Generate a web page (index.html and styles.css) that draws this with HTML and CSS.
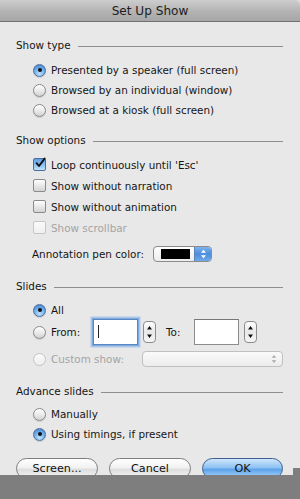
FILE: index.html
```html
<!DOCTYPE html>
<html>
<head>
<meta charset="utf-8">
<link rel="stylesheet" href="styles.css">
</head>
<body>
<div class="window">
  <div class="titlebar">Set Up Show</div>
  <div class="content">
    <div class="sect-head first"><span>Show type</span><i></i></div>
    <div class="opts">
      <div class="row r20"><span class="radio on"></span><span>Presented by a speaker (full screen)</span></div>
      <div class="row r20"><span class="radio"></span><span>Browsed by an individual (window)</span></div>
      <div class="row r20"><span class="radio"></span><span>Browsed at a kiosk (full screen)</span></div>
    </div>

    <div class="sect-head s-opt"><span>Show options</span><i></i></div>
    <div class="opts checks">
      <div class="row r21"><span class="check on"><svg width="12" height="12" viewBox="0 0 12 12"><path d="M2.6 6.2 L5 9 L10.6 1.6" fill="none" stroke="#111" stroke-width="1.9" stroke-linecap="round" stroke-linejoin="round"/></svg></span><span>Loop continuously until 'Esc'</span></div>
      <div class="row r21"><span class="check"></span><span>Show without narration</span></div>
      <div class="row r21"><span class="check"></span><span>Show without animation</span></div>
      <div class="row r21 disabled"><span class="check dis"></span><span>Show scrollbar</span></div>
    </div>
    <div class="pen-row">
      <span class="pen-label">Annotation pen color:</span>
      <span class="popup">
        <span class="swatch"></span>
        <span class="popup-arrows"><svg width="7" height="10" viewBox="0 0 7 10"><path d="M3.5 0.8 L6 3.8 H1 Z M3.5 9.2 L6 6.2 H1 Z" fill="#fff"/></svg></span>
      </span>
    </div>

    <div class="sect-head s-slides"><span>Slides</span><i></i></div>
    <div class="opts">
      <div class="row r18"><span class="radio on"></span><span>All</span></div>
      <div class="row from-row">
        <span class="radio"></span><span class="from-label">From:</span>
        <span class="field focus"><span class="caret"></span></span>
        <span class="stepper"><svg width="7" height="18" viewBox="0 0 7 18"><path d="M3.5 3 L6 6.5 H1 Z M3.5 15 L6 11.5 H1 Z" fill="#111"/></svg></span>
        <span class="to-label">To:</span>
        <span class="field"></span>
        <span class="stepper"><svg width="7" height="18" viewBox="0 0 7 18"><path d="M3.5 3 L6 6.5 H1 Z M3.5 15 L6 11.5 H1 Z" fill="#111"/></svg></span>
      </div>
      <div class="row custom-row disabled">
        <span class="radio dis"></span><span class="custom-label">Custom show:</span>
        <span class="popup-dis"><svg width="6" height="10" viewBox="0 0 6 10"><path d="M3 1 L5.2 3.8 H0.8 Z M3 9 L5.2 6.2 H0.8 Z" fill="#a8a8a8"/></svg></span>
      </div>
    </div>

    <div class="sect-head s-adv"><span>Advance slides</span><i></i></div>
    <div class="opts adv">
      <div class="row r20"><span class="radio"></span><span>Manually</span></div>
      <div class="row r20"><span class="radio on"></span><span>Using timings, if present</span></div>
    </div>

    <div class="buttons">
      <span class="btn">Screen...</span>
      <span class="btn">Cancel</span>
      <span class="btn ok">OK</span>
    </div>
  </div>
  <div class="shade-bottom"></div>
  <div class="shade-right"></div>
</div>
</body>
</html>
```

FILE: styles.css
```css
html, body {
  margin: 0;
  padding: 0;
}
body {
  width: 300px;
  height: 499px;
  overflow: hidden;
  background: #dcdcdc;
  font-family: "DejaVu Sans", "Liberation Sans", sans-serif;
  font-size: 10.4px;
  color: #151515;
}
.window {
  position: relative;
  width: 300px;
  height: 499px;
  background: #e8e8e8;
  border-top-right-radius: 5px;
  overflow: hidden;
}
.titlebar {
  height: 21px;
  border-bottom: 1px solid #707070;
  background: linear-gradient(#cdcdcd, #b3b3b3 55%, #a6a6a6);
  text-align: center;
  line-height: 22px;
  font-size: 12.1px;
  color: #1c1c1c;
}
.content {
  padding: 0 17px 0 16px;
}
.sect-head {
  display: flex;
  align-items: center;
  height: 14px;
}
.sect-head i {
  flex: 1;
  height: 0;
  border-top: 1px solid #8e8e8e;
  margin-left: 7px;
  margin-top: 3px;
}
.sect-head.first { margin-top: 16px; }
.s-opt { margin-top: 13px; }
.s-slides { margin-top: 17px; }
.s-adv { margin-top: 16px; }

.opts {
  padding-left: 17px;
  margin-top: 8px;
}
.opts.checks { margin-top: 7px; }
.opts.adv { margin-top: 6px; }
.row {
  display: flex;
  align-items: center;
  gap: 5px;
}
.r20 { height: 20px; }
.r21 { height: 21px; }
.r18 { height: 18px; }
.disabled { color: #a4a4a4; }

.radio {
  flex: none;
  width: 11px;
  height: 11px;
  border-radius: 50%;
  border: 1px solid #8a8a8a;
  background: linear-gradient(#ffffff, #e6e6e6 60%, #d2d2d2);
  box-shadow: 0 1px 1px rgba(0,0,0,0.12);
  position: relative;
}
.radio.on {
  border-color: #4a6f9e;
  background: radial-gradient(circle at 50% 80%, #bfe1fb, #6aaae8 55%, #3f7fca);
}
.radio.on::after {
  content: "";
  position: absolute;
  left: 3.5px;
  top: 3.5px;
  width: 4px;
  height: 4px;
  border-radius: 50%;
  background: #111;
}
.radio.dis {
  border-color: #c4c4c4;
  background: linear-gradient(#fbfbfb, #eeeeee);
  box-shadow: none;
}

.check {
  flex: none;
  width: 11px;
  height: 11px;
  border: 1px solid #8a8a8a;
  border-radius: 2px;
  background: linear-gradient(#ffffff, #e4e4e4 60%, #d4d4d4);
  position: relative;
}
.check.on {
  border-color: #4a6f9e;
  background: linear-gradient(#5f9ee6, #8cc0f2 55%, #c4e2fb);
}
.check svg {
  position: absolute;
  left: 0;
  top: -2px;
}
.check.dis {
  border-color: #c6c6c6;
  background: linear-gradient(#fbfbfb, #efefef);
}

.pen-row {
  display: flex;
  align-items: center;
  margin-top: 8px;
  padding-left: 16px;
  height: 16px;
}
.pen-label {
  flex: none;
  width: 121px;
}
.popup {
  display: flex;
  align-items: center;
  width: 59px;
  height: 16px;
  box-sizing: border-box;
  border: 1px solid #8c8c8c;
  border-radius: 4px;
  background: linear-gradient(#ffffff, #ececec);
  overflow: hidden;
}
.swatch {
  width: 29px;
  height: 10px;
  margin-left: 7px;
  background: #000;
}
.popup-arrows {
  margin-left: auto;
  width: 16px;
  height: 14px;
  display: flex;
  align-items: center;
  justify-content: center;
  border-left: 1px solid #5a84b8;
  background: linear-gradient(#7fb3ee, #4d8ddb 50%, #6ea9ea);
}

.from-row {
  height: 26px;
  gap: 0;
}
.from-label {
  flex: none;
  margin-left: 5px;
  width: 42px;
}
.field {
  flex: none;
  width: 43px;
  height: 24px;
  border: 1px solid #8c8c8c;
  border-top-color: #777;
  background: #fff;
  box-sizing: content-box;
  position: relative;
}
.field.focus {
  box-shadow: 0 0 0 1px #7fa8dc, 0 0 0 2.5px #a9c8ec;
  border-color: #5c87c0;
}
.caret {
  position: absolute;
  left: 4px;
  top: 5px;
  width: 1px;
  height: 13px;
  background: #222;
}
.stepper {
  flex: none;
  width: 13px;
  height: 22px;
  margin-left: 5px;
  border: 1px solid #8c8c8c;
  border-radius: 4px;
  background: linear-gradient(#ffffff, #e8e8e8 50%, #f6f6f6);
  display: flex;
  align-items: center;
  justify-content: center;
  box-sizing: border-box;
}
.to-label {
  flex: none;
  margin-left: 10px;
  width: 28px;
}
.custom-row {
  height: 18px;
  margin-top: 5px;
  gap: 0;
}
.custom-label {
  flex: none;
  margin-left: 5px;
  width: 91px;
}
.popup-dis {
  flex: 1;
  height: 16px;
  box-sizing: border-box;
  border: 1px solid #c0c0c0;
  border-radius: 4px;
  background: linear-gradient(#fafafa, #ececec);
  display: flex;
  align-items: center;
  justify-content: flex-end;
  padding-right: 5px;
}

.buttons {
  display: flex;
  gap: 11px;
  margin-top: 14px;
}
.btn {
  width: 82px;
  height: 21px;
  box-sizing: border-box;
  border: 1px solid #7e7e7e;
  border-radius: 11px;
  background: linear-gradient(#ffffff, #f2f2f2 45%, #dedede 55%, #f4f4f4);
  text-align: center;
  line-height: 19px;
  font-size: 11.2px;
  color: #111;
}
.btn.ok {
  width: 81px;
  border-color: #3e5f8f;
  background: linear-gradient(#cfe6fc, #8fc2f2 45%, #5ea3ea 55%, #a8d6fb);
}

.shade-bottom {
  position: absolute;
  left: 0;
  right: 0;
  top: 475px;
  bottom: 0;
  background: #7e7e7e;
}
.shade-right {
  position: absolute;
  left: 293px;
  right: 0;
  top: 468px;
  height: 7px;
  background: #7e7e7e;
}
```
